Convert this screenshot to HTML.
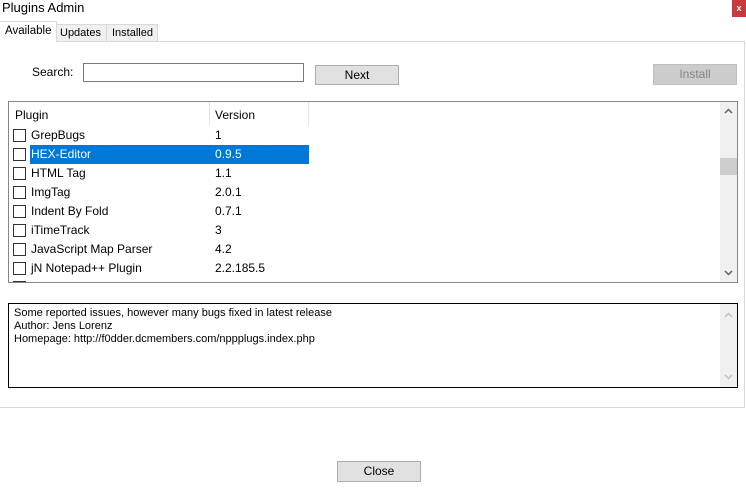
<!DOCTYPE html>
<html><head><meta charset="utf-8"><style>
*{box-sizing:border-box;margin:0;padding:0}
body{width:746px;height:493px;background:#fff;font-family:"Liberation Sans",sans-serif;font-size:12px;color:#000;position:relative;overflow:hidden}
.a{position:absolute}
.btn{position:absolute;background:#e1e1e1;border:1px solid #adadad;text-align:center;line-height:18px;font-size:12px}
.cb{position:absolute;left:13px;width:13px;height:13px;border:1px solid #333;background:#fff}
.row{position:absolute;left:31px;height:19px;line-height:19px;font-size:12px}
.ver{position:absolute;left:215px;height:19px;line-height:19px}
</style></head><body>
<div class="a" style="left:2px;top:0;font-size:13px;line-height:16px">Plugins Admin</div>
<div class="a" style="left:732px;top:0;width:14px;height:17px;background:#c8393c;color:#fff;font-size:9px;line-height:17px;text-align:center;font-weight:bold">x</div>
<div class="a" style="left:0;top:41px;width:745px;height:367px;border:1px solid #d9d9d9;border-left:none"></div>
<div class="a" style="left:56px;top:24px;width:51px;height:18px;background:#f0f0f0;border:1px solid #d9d9d9;line-height:16px;padding-left:3px;font-size:11px">Updates</div>
<div class="a" style="left:106px;top:24px;width:52px;height:18px;background:#f0f0f0;border:1px solid #d9d9d9;line-height:16px;padding-left:5px;font-size:11px">Installed</div>
<div class="a" style="left:0;top:21px;width:57px;height:21px;background:#fff;border:1px solid #d9d9d9;border-bottom:none;border-left:none;line-height:19px;padding-left:5px;font-size:11.5px">Available</div>
<div class="a" style="left:32px;top:65px;line-height:14px">Search:</div>
<div class="a" style="left:83px;top:63px;width:221px;height:19px;border:1px solid #7a7a7a;background:#fff"></div>
<div class="btn" style="left:315px;top:65px;width:84px;height:20px">Next</div>
<div class="btn" style="left:653px;top:64px;width:84px;height:21px;background:#cccccc;border-color:#bfbfbf;color:#838383">Install</div>
<div class="a" style="left:8px;top:101px;width:730px;height:182px;border:1px solid #828790;background:#fff;overflow:hidden">
 <div class="a" style="left:6px;top:6px">Plugin</div>
 <div class="a" style="left:200px;top:0;width:1px;height:24px;background:#e5e5e5"></div>
 <div class="a" style="left:206px;top:6px">Version</div>
 <div class="a" style="left:299px;top:0;width:1px;height:24px;background:#e5e5e5"></div>
 <div class="a" style="left:711px;top:0;width:17px;height:180px;background:#f0f0f0"></div>
 <div class="a" style="left:711px;top:56px;width:17px;height:17px;background:#cdcdcd"></div>
 <svg class="a" style="left:711px;top:4px" width="17" height="10"><path d="M5 7l3.5-3.5L12 7" stroke="#606060" stroke-width="1.5" fill="none"/></svg>
 <svg class="a" style="left:711px;top:166px" width="17" height="10"><path d="M5 3l3.5 3.5L12 3" stroke="#606060" stroke-width="1.5" fill="none"/></svg>
</div>
<div class="a" style="left:30px;top:145px;width:279px;height:19px;background:#0078d7"></div>
<div class="cb" style="top:129px"></div><div class="row" style="top:126px">GrepBugs</div><div class="ver" style="top:126px">1</div>
<div class="cb" style="top:148px"></div><div class="row" style="top:145px;color:#fff">HEX-Editor</div><div class="ver" style="top:145px;color:#fff">0.9.5</div>
<div class="cb" style="top:167px"></div><div class="row" style="top:164px">HTML Tag</div><div class="ver" style="top:164px">1.1</div>
<div class="cb" style="top:186px"></div><div class="row" style="top:183px">ImgTag</div><div class="ver" style="top:183px">2.0.1</div>
<div class="cb" style="top:205px"></div><div class="row" style="top:202px">Indent By Fold</div><div class="ver" style="top:202px">0.7.1</div>
<div class="cb" style="top:224px"></div><div class="row" style="top:221px">iTimeTrack</div><div class="ver" style="top:221px">3</div>
<div class="cb" style="top:243px"></div><div class="row" style="top:240px">JavaScript Map Parser</div><div class="ver" style="top:240px">4.2</div>
<div class="cb" style="top:262px"></div><div class="row" style="top:259px">jN Notepad++ Plugin</div><div class="ver" style="top:259px">2.2.185.5</div>
<div class="a" style="left:13px;top:281px;width:13px;height:1px;background:#333"></div>
<div class="a" style="left:8px;top:303px;width:730px;height:85px;border:1px solid #000;background:#fff;font-size:11px;line-height:13px;padding:3px 0 0 5px">
Some reported issues, however many bugs fixed in latest release<br>Author: Jens Lorenz<br>Homepage: http://f0dder.dcmembers.com/nppplugs.index.php
 <div class="a" style="left:711px;top:0;width:17px;height:83px;background:#f0f0f0"></div>
 <svg class="a" style="left:711px;top:6px" width="17" height="10"><path d="M5 7l3.5-3.5L12 7" stroke="#c0c0c0" stroke-width="1.5" fill="none"/></svg>
 <svg class="a" style="left:711px;top:68px" width="17" height="10"><path d="M5 3l3.5 3.5L12 3" stroke="#c0c0c0" stroke-width="1.5" fill="none"/></svg>
</div>
<div class="btn" style="left:337px;top:461px;width:84px;height:21px">Close</div>
</body></html>
